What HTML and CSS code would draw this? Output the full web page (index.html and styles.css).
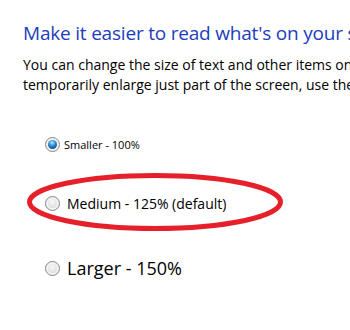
FILE: index.html
```html
<!DOCTYPE html>
<html>
<head>
<meta charset="utf-8">
<link rel="stylesheet" href="styles.css">
</head>
<body>
<div class="page">
  <h1 class="title">Make it easier to read what's on your screen</h1>
  <p class="desc">You can change the size of text and other items on your screen by choosing one of these options. To<br>temporarily enlarge just part of the screen, use the Magnifier tool.</p>
  <div class="options">
    <label class="option small"><span class="radio checked"></span><span class="label">Smaller - 100%</span></label>
    <label class="option medium"><span class="radio"></span><span class="label">Medium - 125% (default)</span>
      <svg class="circle" width="270" height="70" viewBox="0 0 270 70"><ellipse cx="134" cy="34" rx="125.5" ry="26.5" fill="none" stroke="#e6202a" stroke-width="5"/></svg>
    </label>
    <label class="option large"><span class="radio"></span><span class="label">Larger - 150%</span></label>
  </div>
</div>
</body>
</html>
```
FILE: styles.css
```css
html, body {
  margin: 0;
  padding: 0;
  background: #ffffff;
  overflow: hidden;
}
.page {
  width: 700px;
  padding: 20px 0 0 23px;
  font-family: "Open Sans", "Noto Sans", sans-serif;
  color: #000;
}
.title {
  margin: 0;
  font-size: 19px;
  font-weight: normal;
  line-height: 26px;
  letter-spacing: -0.2px;
  color: #1c3dbf;
  white-space: nowrap;
}
.desc {
  margin: 9px 0 0 0;
  font-size: 14px;
  line-height: 20px;
  white-space: nowrap;
}
.options {
  display: flex;
  flex-direction: column;
  padding-left: 22px;
  margin-top: 39px;
}
.option {
  display: flex;
  align-items: center;
  position: relative;
}
.option.small { height: 20px; font-size: 11px; gap: 4px; }
.option.medium { height: 22px; font-size: 14px; gap: 7px; margin-top: 38px; }
.option.large { height: 26px; font-size: 18px; gap: 7px; margin-top: 41px; }
.radio {
  width: 15px;
  height: 15px;
  border-radius: 50%;
  box-sizing: border-box;
  border: 1px solid #868787;
  background: #f2f2f2;
  flex: none;
  position: relative;
}
.radio::after {
  content: "";
  position: absolute;
  left: 2px; top: 2px; right: 2px; bottom: 2px;
  border-radius: 50%;
  background: radial-gradient(circle at 45% 35%, #f8f8f8 0%, #e4e4e4 60%, #cdcdcd 100%);
}
.radio.checked::after {
  background: radial-gradient(circle at 45% 30%, #c4e8ff 0%, #3a9ad9 35%, #0f5a96 70%, #0a3e6e 100%);
}
.circle {
  position: absolute;
  left: -24px;
  top: -24px;
  pointer-events: none;
}
```
